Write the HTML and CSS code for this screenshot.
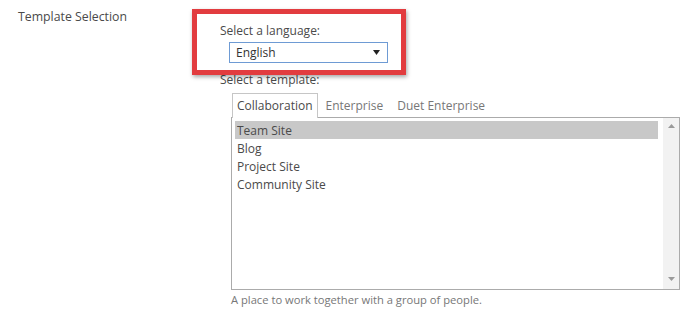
FILE: index.html
```html
<!DOCTYPE html>
<html lang="en">
  <head>
    <meta charset="UTF-8" />
    <meta name="viewport" content="width=device-width, initial-scale=1.0" />
    <title>Template Selection</title>
    <link rel="stylesheet" href="styles.css">
  </head>
  <body>
    <div class="section">
      <div class="section-label">Template Selection</div>

      <div class="section-body">
        <!-- highlighted language picker -->
        <div class="callout">
          <div class="field-label">Select a language:</div>
          <div class="select">
            <span>English</span>
            <svg class="caret" width="7" height="5" viewBox="0 0 7 5">
              <path d="M0 0h7L3.5 5z" fill="#222" />
            </svg>
          </div>
        </div>

        <div class="field-label template-label">Select a template:</div>

        <div class="template-picker">
          <div class="tabs">
            <div class="tab active">Collaboration</div>
            <div class="tab">Enterprise</div>
            <div class="tab">Duet Enterprise</div>
          </div>

          <div class="listbox">
            <ul class="items">
              <li class="selected">Team Site</li>
              <li>Blog</li>
              <li>Project Site</li>
              <li>Community Site</li>
            </ul>
            <div class="scrollbar">
              <svg width="7" height="4" viewBox="0 0 7 4">
                <path d="M0 4h7L3.5 0z" fill="#9a9a9a" />
              </svg>
              <svg width="7" height="4" viewBox="0 0 7 4">
                <path d="M0 0h7L3.5 4z" fill="#9a9a9a" />
              </svg>
            </div>
          </div>

          <p class="description">A place to work together with a group of people.</p>
        </div>
      </div>
    </div>
  </body>
</html>
```

FILE: styles.css
```css
* {
  margin: 0;
  padding: 0;
  box-sizing: border-box;
}

body {
  font-family: "Open Sans", "Noto Sans", sans-serif;
  font-size: 12px;
  background-color: #fff;
  color: #4a4a4a;
  width: 696px;
  height: 312px;
  overflow: hidden;
}

.section {
  display: flex;
}

.section-label {
  width: 192px;
  padding: 8px 0 0 18px;
  font-size: 12.3px;
  line-height: 18px;
}

.section-body {
  flex: 1;
  padding-top: 9px;
}

/* red annotation box */
.callout {
  width: 214px;
  border: 5px solid #e23c3f;
  padding: 9px 0 7px 23px;
  box-shadow: 1px 2px 4px rgba(0, 0, 0, 0.35);
  position: relative;
  z-index: 1;
}

.field-label {
  line-height: 16px;
  color: #4a4a4a;
}

.select {
  width: 159px;
  height: 21px;
  margin: 3px 0 0 9px;
  border: 1px solid #6e9bd4;
  padding: 0 6px;
  display: flex;
  align-items: center;
  justify-content: space-between;
  color: #333;
}

.caret {
  margin-right: 1px;
}

.template-label {
  margin: -3px 0 0 28px;
}

.template-picker {
  margin: 5px 0 0 39px;
}

.tabs {
  display: flex;
  height: 24px;
  padding-left: 1px;
  position: relative;
  z-index: 1;
}

.tab {
  padding: 2px 4px 0;
  margin-right: 4px;
  line-height: 20px;
  color: #777;
  border: 1px solid transparent;
  border-bottom: none;
}

.tab.active {
  color: #4a4a4a;
  background-color: #fff;
  border-color: #c6c6c6;
  height: 25px;
  margin-right: 3px;
}

.listbox {
  width: 449px;
  height: 173px;
  border: 1px solid #ababab;
  display: flex;
}

.items {
  flex: 1;
  list-style: none;
  padding: 3px 5px 0 3px;
}

.items li {
  line-height: 18px;
  padding: 1px 0 0 2px;
  height: 18px;
  color: #4a4a4a;
}

.items li.selected {
  background-color: #c8c8c8;
}

.scrollbar {
  width: 16px;
  background-color: #f2f2f2;
  display: flex;
  flex-direction: column;
  justify-content: space-between;
  align-items: center;
  padding: 6px 0 8px;
}

.description {
  margin-top: 2px;
  line-height: 16px;
  font-size: 11.2px;
  color: #777;
}
```
